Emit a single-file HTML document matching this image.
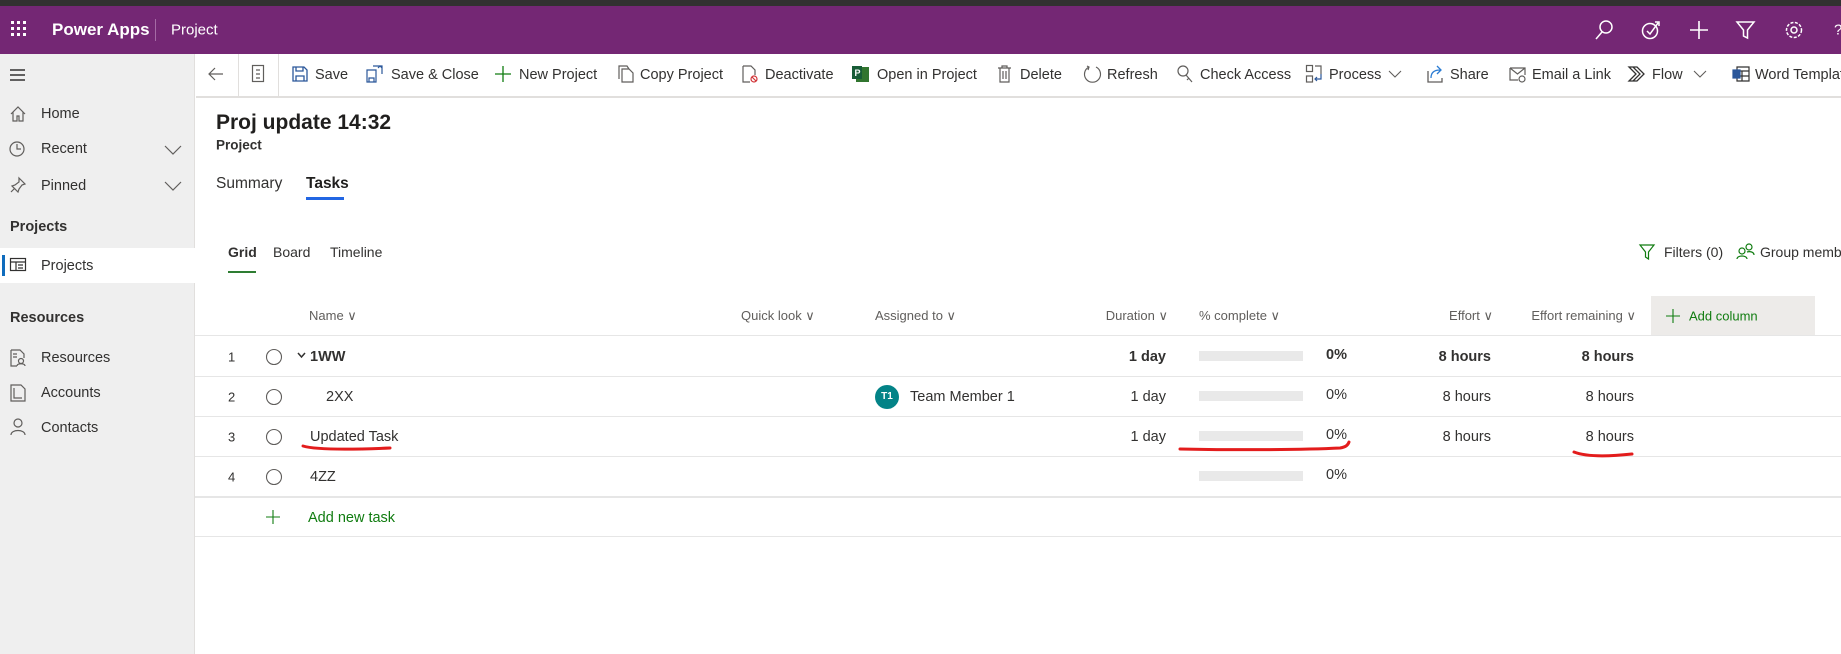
<!DOCTYPE html>
<html><head><meta charset="utf-8"><style>
*{margin:0;padding:0;box-sizing:border-box}
body{width:1841px;height:654px;overflow:hidden;background:#fff;font-family:"Segoe UI","Liberation Sans",sans-serif;color:#323130;position:relative}
.a{position:absolute;white-space:nowrap}
.c{transform:translateY(-50%)}
.r{transform:translate(-100%,-50%);text-align:right}
svg{position:absolute;overflow:visible}
.cmd{font-size:14.5px;color:#323130}
.nav{font-size:14.5px;color:#323130}
.hd{font-size:13px;color:#605e5c}
.cell{font-size:14.5px;color:#323130}
.ln{position:absolute;left:195px;width:1646px;height:1px;background:#e6e6e6}
.bar{position:absolute;left:1199px;width:104px;height:10px;background:#e9e9e9}
</style></head><body>
<div class="a" style="left:0;top:0;width:1841px;height:6px;background:#323130"></div>
<div class="a" style="left:0;top:6px;width:1841px;height:48px;background:#742774"></div>
<svg width="20" height="20" style="left:11px;top:21px" fill="#fff">
<rect x="0" y="0" width="3" height="3"/><rect x="6" y="0" width="3" height="3"/><rect x="12" y="0" width="3" height="3"/>
<rect x="0" y="6" width="3" height="3"/><rect x="6" y="6" width="3" height="3"/><rect x="12" y="6" width="3" height="3"/>
<rect x="0" y="12" width="3" height="3"/><rect x="6" y="12" width="3" height="3"/><rect x="12" y="12" width="3" height="3"/></svg>
<div class="a c" style="left:52px;top:30px;color:#fff;font-size:17px;font-weight:bold">Power Apps</div>
<div class="a" style="left:155px;top:19px;width:1px;height:22px;background:#a56aa5"></div>
<div class="a c" style="left:171px;top:30px;color:#fff;font-size:15px">Project</div>
<svg width="20" height="20" style="left:1594px;top:20px" stroke="#fff" stroke-width="1.5" fill="none"><circle cx="12" cy="7" r="6"/><path d="M8 12L2 19"/></svg>
<svg width="20" height="20" style="left:1641px;top:20px" stroke="#fff" stroke-width="1.5" fill="none"><circle cx="9" cy="11" r="7.5"/><path d="M6 11l3 3 8-11M14 2h4v4"/></svg>
<svg width="20" height="20" style="left:1689px;top:20px" stroke="#fff" stroke-width="1.6" fill="none"><path d="M10 1v18M1 10h18"/></svg>
<svg width="20" height="20" style="left:1736px;top:20px" stroke="#fff" stroke-width="1.5" fill="none"><path d="M1 2h17l-6.5 8v8l-4-2v-6z"/></svg>
<svg width="20" height="20" style="left:1784px;top:20px" stroke="#fff" stroke-width="1.5" fill="none"><circle cx="10" cy="10" r="3"/><circle cx="10" cy="10" r="7.5" stroke-dasharray="3 1.5"/></svg>
<div class="a c" style="left:1834px;top:30px;color:#fff;font-size:15px">?</div>

<div class="a" style="left:0;top:54px;width:195px;height:600px;background:#efefef;border-right:1px solid #e1dfdd"></div>
<svg width="16" height="12" style="left:10px;top:69px" stroke="#323130" stroke-width="1.4"><path d="M0 1h15M0 6h15M0 11h15"/></svg>
<svg width="16" height="16" style="left:10px;top:106px" stroke="#605e5c" stroke-width="1.2" fill="none"><path d="M1 8L8 1l7 7M3 6v9h4v-5h2v5h4V6"/></svg>
<div class="a c nav" style="left:41px;top:114px">Home</div>
<svg width="16" height="16" style="left:9px;top:141px" stroke="#605e5c" stroke-width="1.2" fill="none"><circle cx="8" cy="8" r="7"/><path d="M8 3v5h4"/></svg>
<div class="a c nav" style="left:41px;top:149px">Recent</div>
<svg width="18" height="10" style="left:164px;top:145px" stroke="#605e5c" stroke-width="1.2" fill="none"><path d="M1 1l8 8 8-8"/></svg>
<svg width="16" height="16" style="left:10px;top:177px" stroke="#605e5c" stroke-width="1.2" fill="none"><path d="M9 1l6 6-3 1-3 4-1 3-6-6 3-1 4-3zM5 11l-4 4"/></svg>
<div class="a c nav" style="left:41px;top:186px">Pinned</div>
<svg width="18" height="10" style="left:164px;top:181px" stroke="#605e5c" stroke-width="1.2" fill="none"><path d="M1 1l8 8 8-8"/></svg>
<div class="a c nav" style="left:10px;top:227px;font-weight:600">Projects</div>
<div class="a" style="left:0;top:248px;width:195px;height:35px;background:#fff"></div>
<div class="a" style="left:2px;top:255px;width:3px;height:21px;background:#0f6cbd"></div>
<svg width="16" height="14" style="left:10px;top:258px" stroke="#323130" stroke-width="1.2" fill="none"><rect x="0.5" y="0.5" width="15" height="12"/><path d="M0.5 4h15M6 4v9M8 7h5M8 10h5"/></svg>
<div class="a c nav" style="left:41px;top:266px">Projects</div>
<div class="a c nav" style="left:10px;top:318px;font-weight:600">Resources</div>
<svg width="16" height="18" style="left:10px;top:349px" stroke="#605e5c" stroke-width="1.2" fill="none"><path d="M1 1h9l4 4v4M1 1v16h6M3 5h4M3 8h4"/><circle cx="11" cy="12" r="2.5"/><path d="M7 17c0-3 8-3 8 0"/></svg>
<div class="a c nav" style="left:41px;top:358px">Resources</div>
<svg width="16" height="18" style="left:10px;top:384px" stroke="#605e5c" stroke-width="1.2" fill="none"><path d="M1 1h10l4 4v12H1zM4 4v10h8"/></svg>
<div class="a c nav" style="left:41px;top:393px">Accounts</div>
<svg width="16" height="18" style="left:10px;top:418px" stroke="#605e5c" stroke-width="1.2" fill="none"><circle cx="8" cy="5" r="4"/><path d="M1 17c0-6 14-6 14 0"/></svg>
<div class="a c nav" style="left:41px;top:428px">Contacts</div>

<div class="a" style="left:196px;top:96px;width:1645px;height:2px;background:#e1dfdd"></div>
<svg width="16" height="14" style="left:208px;top:67px" stroke="#605e5c" stroke-width="1.2" fill="none"><path d="M15 7H1M7 1L1 7l6 6"/></svg>
<div class="a" style="left:238px;top:54px;width:1px;height:42px;background:#e1dfdd"></div>
<svg width="14" height="18" style="left:252px;top:65px" stroke="#605e5c" stroke-width="1.2" fill="none"><rect x="0.5" y="0.5" width="11" height="16"/><path d="M4 5h4M4 9h4M4 13h4"/></svg>
<div class="a" style="left:278px;top:54px;width:1px;height:42px;background:#e1dfdd"></div>
<svg width="16" height="16" style="left:292px;top:66px" stroke="#2b579a" stroke-width="1.3" fill="none"><path d="M1 1h11l3 3v11H1zM4 1v4h7V1M4 15v-5h8v5"/></svg>
<div class="a c cmd" style="left:315px;top:75px">Save</div>
<svg width="18" height="18" style="left:366px;top:65px" stroke="#2b579a" stroke-width="1.2" fill="none"><path d="M1 5h9v12H1zM3 17v-4h5v4M7 1h9v8M12 3l2-2 2 2"/></svg>
<div class="a c cmd" style="left:391px;top:75px">Save &amp; Close</div>
<svg width="16" height="16" style="left:495px;top:66px" stroke="#107c10" stroke-width="1.3"><path d="M8 0v16M0 8h16"/></svg>
<div class="a c cmd" style="left:519px;top:75px">New Project</div>
<svg width="16" height="18" style="left:618px;top:65px" stroke="#605e5c" stroke-width="1.2" fill="none"><path d="M4 4h7l4 4v9H4zM1 14V1h8l2 3"/></svg>
<div class="a c cmd" style="left:640px;top:75px">Copy Project</div>
<svg width="16" height="18" style="left:742px;top:65px" stroke="#605e5c" stroke-width="1.2" fill="none"><path d="M1 1h8l4 4v5M1 1v16h7"/><circle cx="12" cy="14" r="3" stroke="#d13438"/><path d="M10 12l4 4" stroke="#d13438"/></svg>
<div class="a c cmd" style="left:765px;top:75px">Deactivate</div>
<svg width="18" height="18" style="left:852px;top:65px"><rect x="4" y="2" width="13" height="15" fill="#31752f"/><rect x="0" y="1" width="10" height="13" fill="#185c37"/><text x="2.5" y="11" fill="#fff" font-size="9" font-family="Liberation Sans" font-weight="bold">P</text></svg>
<div class="a c cmd" style="left:877px;top:75px">Open in Project</div>
<svg width="14" height="18" style="left:998px;top:65px" stroke="#605e5c" stroke-width="1.2" fill="none"><path d="M0 3h13M4 3V1h5v2M2 3v14h9V3M5 6v8M8 6v8"/></svg>
<div class="a c cmd" style="left:1020px;top:75px">Delete</div>
<svg width="18" height="18" style="left:1084px;top:65px" stroke="#605e5c" stroke-width="1.2" fill="none"><path d="M12 2a8 8 0 1 1-7 0M3 1l2 1-1 3"/></svg>
<div class="a c cmd" style="left:1107px;top:75px">Refresh</div>
<svg width="16" height="18" style="left:1177px;top:65px" stroke="#605e5c" stroke-width="1.2" fill="none"><circle cx="6" cy="6" r="5"/><path d="M9 10l6 7M12 13l-2 2"/></svg>
<div class="a c cmd" style="left:1200px;top:75px">Check Access</div>
<svg width="16" height="18" style="left:1306px;top:65px" stroke="#605e5c" stroke-width="1.2" fill="none"><rect x="0.5" y="0.5" width="6" height="6"/><rect x="0.5" y="11" width="6" height="6"/><path d="M9 1h6v8" /><path d="M15 9v5H9M11 12l-2 2 2 2" stroke="#2b579a"/></svg>
<div class="a c cmd" style="left:1329px;top:75px">Process</div>
<svg width="14" height="8" style="left:1388px;top:70px" stroke="#605e5c" stroke-width="1.1" fill="none"><path d="M1 1l6 6 6-6"/></svg>
<svg width="18" height="18" style="left:1427px;top:65px" fill="none" stroke-width="1.3"><path d="M1 6v11h14v-4" stroke="#605e5c"/><path d="M4 13c0-6 4-8 9-8M10 1l4 4-4 4" stroke="#2b7cd3"/></svg>
<div class="a c cmd" style="left:1450px;top:75px">Share</div>
<svg width="18" height="18" style="left:1509px;top:65px" stroke="#605e5c" stroke-width="1.2" fill="none"><path d="M1 3h15v7M1 3v12h8M1 3l7.5 6L16 3"/><circle cx="13" cy="14" r="3"/></svg>
<div class="a c cmd" style="left:1532px;top:75px">Email a Link</div>
<svg width="18" height="16" style="left:1628px;top:66px" stroke="#323130" stroke-width="1.3" fill="none"><path d="M1 1h8l7 7-7 7H1l7-7zM5 1l7 7-7 7"/></svg>
<div class="a c cmd" style="left:1652px;top:75px">Flow</div>
<svg width="14" height="8" style="left:1693px;top:70px" stroke="#605e5c" stroke-width="1.1" fill="none"><path d="M1 1l6 6 6-6"/></svg>
<svg width="18" height="16" style="left:1732px;top:66px" stroke="#323130" stroke-width="1.2" fill="none"><path d="M5 1h12v14H5zM5 5h12M5 10h12M10 5v10"/><rect x="1" y="4" width="7" height="8" fill="#2b579a" stroke="#2b579a"/></svg>
<div class="a c cmd" style="left:1755px;top:75px">Word Templates</div>

<div class="a c" style="left:216px;top:123px;font-size:21px;font-weight:600;color:#201f1e">Proj update 14:32</div>
<div class="a c" style="left:216px;top:145px;font-size:13.5px;font-weight:600;color:#323130">Project</div>
<div class="a c" style="left:216px;top:184px;font-size:15.5px;color:#323130">Summary</div>
<div class="a c" style="left:306px;top:184px;font-size:15.5px;color:#201f1e;font-weight:600">Tasks</div>
<div class="a" style="left:306px;top:197px;width:38px;height:3px;background:#2266e3"></div>

<div class="a c" style="left:228px;top:252px;font-size:14px;color:#323130;font-weight:600">Grid</div>
<div class="a c" style="left:273px;top:252px;font-size:14px;color:#323130">Board</div>
<div class="a c" style="left:330px;top:252px;font-size:14px;color:#323130">Timeline</div>
<div class="a" style="left:228px;top:271px;width:28px;height:2px;background:#2e7d32"></div>
<svg width="16" height="16" style="left:1639px;top:244px" stroke="#107c10" stroke-width="1.2" fill="none"><path d="M1 1h14l-5.5 7v7l-3-2V8z"/></svg>
<div class="a c" style="left:1664px;top:252px;font-size:14px;color:#323130">Filters (0)</div>
<svg width="18" height="16" style="left:1737px;top:243px" stroke="#107c10" stroke-width="1.2" fill="none"><circle cx="5" cy="8" r="3"/><path d="M0 16c0-4 10-4 10 0"/><circle cx="12" cy="4" r="3"/><path d="M10 9c3-1 7 0 7 3"/></svg>
<div class="a c" style="left:1760px;top:252px;font-size:14px;color:#323130">Group members</div>

<div class="a" style="left:1651px;top:296px;width:164px;height:39px;background:#edebe9"></div>
<svg width="14" height="14" style="left:1666px;top:309px" stroke="#107c10" stroke-width="1.1"><path d="M7 0v14M0 7h14"/></svg>
<div class="a c" style="left:1689px;top:316px;font-size:13px;color:#107c10">Add column</div>
<div class="a c hd" style="left:309px;top:316px">Name ∨</div>
<div class="a c hd" style="left:741px;top:316px">Quick look ∨</div>
<div class="a c hd" style="left:875px;top:316px">Assigned to ∨</div>
<div class="a r hd" style="left:1168px;top:316px">Duration ∨</div>
<div class="a c hd" style="left:1199px;top:316px">% complete ∨</div>
<div class="a r hd" style="left:1493px;top:316px">Effort ∨</div>
<div class="a r hd" style="left:1636px;top:316px">Effort remaining ∨</div>

<div class="ln" style="top:335px"></div>
<div class="ln" style="top:376px"></div>
<div class="ln" style="top:416px"></div>
<div class="ln" style="top:456px"></div>
<div class="ln" style="top:496px;height:2px"></div>
<div class="ln" style="top:536px"></div>

<div class="a c cell" style="left:228px;top:357px;font-size:13px">1</div>
<div class="a c cell" style="left:228px;top:397px;font-size:13px">2</div>
<div class="a c cell" style="left:228px;top:437px;font-size:13px">3</div>
<div class="a c cell" style="left:228px;top:477px;font-size:13px">4</div>
<svg width="20" height="200" style="left:266px;top:348px" stroke="#605e5c" stroke-width="1.1" fill="none"><circle cx="8" cy="9" r="7.5"/><circle cx="8" cy="49" r="7.5"/><circle cx="8" cy="89" r="7.5"/><circle cx="8" cy="129" r="7.5"/></svg>
<svg width="10" height="6" style="left:297px;top:352px" stroke="#323130" stroke-width="1.5" fill="none"><path d="M1 1l3.5 4L8 1"/></svg>
<div class="a c cell" style="left:310px;top:357px;font-weight:bold">1WW</div>
<div class="a c cell" style="left:326px;top:397px">2XX</div>
<div class="a c cell" style="left:310px;top:437px">Updated Task</div>
<div class="a c cell" style="left:310px;top:477px">4ZZ</div>
<svg width="14" height="14" style="left:266px;top:510px" stroke="#107c10" stroke-width="1.1"><path d="M7 0v14M0 7h14"/></svg>
<div class="a c cell" style="left:308px;top:518px;color:#107c10">Add new task</div>

<div class="a" style="left:875px;top:385px;width:24px;height:24px;border-radius:50%;background:#038387;color:#fff;font-size:10px;font-weight:bold;text-align:center;line-height:24px">T1</div>
<div class="a c cell" style="left:910px;top:397px">Team Member 1</div>

<div class="a r cell" style="left:1166px;top:357px;font-weight:bold">1 day</div>
<div class="a r cell" style="left:1166px;top:397px">1 day</div>
<div class="a r cell" style="left:1166px;top:437px">1 day</div>
<div class="bar" style="top:351px"></div>
<div class="bar" style="top:391px"></div>
<div class="bar" style="top:431px"></div>
<div class="bar" style="top:471px"></div>
<div class="a c cell" style="left:1326px;top:355px;font-weight:bold">0%</div>
<div class="a c cell" style="left:1326px;top:395px">0%</div>
<div class="a c cell" style="left:1326px;top:435px">0%</div>
<div class="a c cell" style="left:1326px;top:475px">0%</div>
<div class="a r cell" style="left:1491px;top:357px;font-weight:bold">8 hours</div>
<div class="a r cell" style="left:1491px;top:397px">8 hours</div>
<div class="a r cell" style="left:1491px;top:437px">8 hours</div>
<div class="a r cell" style="left:1634px;top:357px;font-weight:bold">8 hours</div>
<div class="a r cell" style="left:1634px;top:397px">8 hours</div>
<div class="a r cell" style="left:1634px;top:437px">8 hours</div>

<svg width="1841" height="654" style="left:0;top:0" stroke="#e31c1c" stroke-width="3" fill="none" stroke-linecap="round">
<path d="M303 446c10 3 40 4 87 2"/>
<path d="M1180 449c40 1 120 1 160-1 6-1 8-3 9-6"/>
<path d="M1574 452c10 4 30 5 58 2"/>
</svg>
</body></html>
